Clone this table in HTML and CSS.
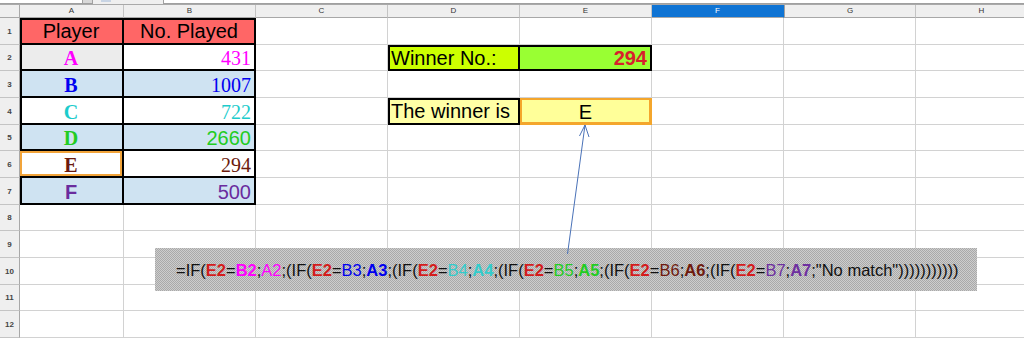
FILE: index.html
```html
<!DOCTYPE html>
<html>
<head>
<meta charset="utf-8">
<link rel="stylesheet" href="styles.css">
</head>
<body>
<div class="app">
  <div class="fbar">
    <div class="namebox"></div>
    <div class="nbtn"></div>
    <div class="ficon"></div>
    <div class="finput"></div>
  </div>
  <div class="sheet">
    <div class="grid">
      <div class="ch corner"></div>
      <div class="ch">A</div><div class="ch">B</div><div class="ch">C</div><div class="ch">D</div><div class="ch">E</div><div class="ch sel">F</div><div class="ch gsep">G</div><div class="ch">H</div>

      <div class="rh">1</div>
      <div class="c tb bl bt title">Player</div><div class="c tb bt title">No. Played</div>
      <div class="c"></div><div class="c"></div><div class="c"></div><div class="c"></div><div class="c"></div><div class="c"></div>

      <div class="rh">2</div>
      <div class="c tb bl grey ltr magenta">A</div><div class="c tb num serif magenta">431</div>
      <div class="c"></div><div class="c wb bl bt lime txt">Winner No.:</div><div class="c wb bt green num bold redtxt sans">294</div><div class="c"></div><div class="c"></div><div class="c"></div>

      <div class="rh">3</div>
      <div class="c tb bl blue ltr bluetxt">B</div><div class="c tb blue num serif bluetxt">1007</div>
      <div class="c"></div><div class="c"></div><div class="c"></div><div class="c"></div><div class="c"></div><div class="c"></div>

      <div class="rh">4</div>
      <div class="c tb bl ltr cyan">C</div><div class="c tb num serif cyan">722</div>
      <div class="c"></div><div class="c wb bl bt yellow txt">The winner is</div><div class="c yellow2 cursor mid txt">E</div><div class="c"></div><div class="c"></div><div class="c"></div>

      <div class="rh">5</div>
      <div class="c tb bl blue ltr greentxt">D</div><div class="c tb blue num sans greentxt">2660</div>
      <div class="c"></div><div class="c"></div><div class="c"></div><div class="c"></div><div class="c"></div><div class="c"></div>

      <div class="rh">6</div>
      <div class="c tb bl ltr maroon a6">E</div><div class="c tb num serif maroon">294</div>
      <div class="c"></div><div class="c"></div><div class="c"></div><div class="c"></div><div class="c"></div><div class="c"></div>

      <div class="rh">7</div>
      <div class="c tb bl blue ltr sansltr purple">F</div><div class="c tb blue num sans purple">500</div>
      <div class="c"></div><div class="c"></div><div class="c"></div><div class="c"></div><div class="c"></div><div class="c"></div>

      <div class="rh">8</div>
      <div class="c"></div><div class="c"></div><div class="c"></div><div class="c"></div><div class="c"></div><div class="c"></div><div class="c"></div><div class="c"></div>
      <div class="rh">9</div>
      <div class="c"></div><div class="c"></div><div class="c"></div><div class="c"></div><div class="c"></div><div class="c"></div><div class="c"></div><div class="c"></div>
      <div class="rh">10</div>
      <div class="c"></div><div class="c"></div><div class="c"></div><div class="c"></div><div class="c"></div><div class="c"></div><div class="c"></div><div class="c"></div>
      <div class="rh">11</div>
      <div class="c"></div><div class="c"></div><div class="c"></div><div class="c"></div><div class="c"></div><div class="c"></div><div class="c"></div><div class="c"></div>
      <div class="rh">12</div>
      <div class="c"></div><div class="c"></div><div class="c"></div><div class="c"></div><div class="c"></div><div class="c"></div><div class="c"></div><div class="c"></div>
    </div>

    <div class="formula">=IF(<b class="fr">E2</b>=<b class="fm">B2</b>;<span class="fm">A2</span>;(IF(<b class="fr">E2</b>=<span class="fb">B3</span>;<b class="fb">A3</b>;(IF(<b class="fr">E2</b>=<span class="fc">B4</span>;<b class="fc">A4</b>;(IF(<b class="fr">E2</b>=<span class="fg">B5</span>;<b class="fg">A5</b>;(IF(<b class="fr">E2</b>=<span class="fo">B6</span>;<b class="fo">A6</b>;(IF(<b class="fr">E2</b>=<span class="fp">B7</span>;<b class="fp">A7</b>;"No match")))))))))))</div>

    <svg class="arrow" width="1024" height="339" viewBox="0 0 1024 339">
      <line x1="567.5" y1="254" x2="585" y2="125" stroke="#4a72b8" stroke-width="1"/>
      <polyline points="579.5,136 585,125 589,137" fill="none" stroke="#4a72b8" stroke-width="1"/>
    </svg>
  </div>
</div>
</body>
</html>
```

FILE: styles.css
```css
html, body {
  margin: 0;
  padding: 0;
  background: #ffffff;
  overflow: hidden;
}
.app {
  width: 1024px;
  height: 339px;
  overflow: hidden;
  font-family: "Liberation Sans", Arial, sans-serif;
}
.fbar {
  height: 4px;
  background: #efefef;
  display: flex;
  border-bottom: 1px solid #a9a9a9;
  overflow: hidden;
}
.namebox {
  width: 82px;
  height: 3px;
  background: #fff;
  border-right: 1px solid #a0a0a0;
  border-bottom: 1px solid #a0a0a0;
}
.nbtn {
  width: 9px;
  height: 3px;
  background: #d8d8d8;
  border-bottom: 1px solid #a0a0a0;
  border-right: 1px solid #a0a0a0;
}
.ficon {
  width: 10px;
  height: 2px;
  margin-left: 8px;
  background: #c8d4e4;
}
.finput {
  flex: 1;
  margin-left: 52px;
  height: 3px;
  background: #fff;
  border-left: 1px solid #a0a0a0;
  border-bottom: 1px solid #a0a0a0;
}
.sheet {
  position: relative;
}
.grid {
  display: grid;
  grid-template-columns: 20px 104px 132px 132px 132px 132px 132px 132px 132px;
  grid-template-rows: 13px 27px 26px 27px 27px 26px 27px 27px 26px 27px 27px 26px 27px;
}
.ch {
  box-sizing: border-box;
  background: #efefef;
  border-right: 1px solid #c4c4c4;
  border-bottom: 1px solid #a8a8a8;
  font-size: 8px;
  color: #333;
  display: flex;
  align-items: center;
  justify-content: center;
  line-height: 1;
}
.corner {
  border-right: 1px solid #a8a8a8;
}
.sel {
  background: #0f74d4;
  color: #fff;
  border-right-color: #0f74d4;
}
.gsep {
  border-left: 1px solid #a0a0a0;
}
.rh {
  box-sizing: border-box;
  background: #efefef;
  border-right: 1px solid #a8a8a8;
  border-bottom: 1px solid #c4c4c4;
  font-size: 8px;
  font-weight: bold;
  color: #444;
  display: flex;
  align-items: center;
  justify-content: center;
}
.c {
  box-sizing: border-box;
  border-right: 1px solid #d2d2d2;
  border-bottom: 1px solid #d2d2d2;
  display: flex;
  align-items: center;
  padding: 1px 3px 0;
  font-size: 20px;
  line-height: 1;
  white-space: nowrap;
  overflow: hidden;
}
.tb, .wb {
  border-right: 2px solid #000;
  border-bottom: 2px solid #000;
}
.bl { box-shadow: inset 2px 0 0 #000; }
.bt { box-shadow: inset 0 2px 0 #000; }
.bl.bt { box-shadow: inset 2px 2px 0 #000; }
.title {
  background: #ff6666;
  color: #000;
  justify-content: center;
  padding-top: 1px;
}
.grey { background: #ececec; }
.blue { background: #cfe3f2; }
.lime { background: #ccff00; }
.green { background: #99ff33; }
.yellow { background: #ffffa6; }
.yellow2 { background: #ffff99; }
.txt { color: #000; }
.ltr {
  justify-content: center;
  font-family: "Liberation Serif", "Times New Roman", serif;
  font-weight: bold;
  padding-top: 2px;
}
.sansltr {
  font-family: "Liberation Sans", Arial, sans-serif;
}
.num { justify-content: flex-end; padding-top: 2px; }
.serif { font-family: "Liberation Serif", "Times New Roman", serif; }
.sans { font-family: "Liberation Sans", Arial, sans-serif; }
.bold { font-weight: bold; }
.mid { justify-content: center; }
.magenta { color: #ff00ff; }
.bluetxt { color: #0000f0; }
.cyan { color: #1ccccc; }
.greentxt { color: #22cc22; }
.maroon { color: #6b1a0d; }
.purple { color: #6a2c9e; }
.redtxt { color: #d8202c; }
.a6 {
  box-shadow: inset 2px 2px 0 #f2a43a, inset -2px -2px 0 #f2a43a;
}
.cursor {
  box-shadow: inset 0 0 0 2px #f4a62c;
  border-right: 1px solid #f4a62c;
  border-bottom: 1px solid #f4a62c;
}
.formula {
  position: absolute;
  left: 155px;
  top: 243px;
  width: 822px;
  height: 43px;
  box-sizing: border-box;
  padding-left: 21px;
  padding-top: 2px;
  display: flex;
  align-items: center;
  font-size: 16.5px;
  color: #111;
  white-space: nowrap;
  background: repeating-conic-gradient(#a9a9a9 0 25%, #cdcdcd 0 50%) 0 0 / 2px 2px;
}
.formula b { font-weight: bold; }
.fr { color: #d41c1c; }
.fm { color: #ff00ff; }
.fb { color: #0000ee; }
.fc { color: #33cccc; }
.fg { color: #22cc22; }
.fo { color: #6e1a0e; }
.fp { color: #6e30a0; }
.arrow {
  position: absolute;
  left: 0;
  top: -5px;
  pointer-events: none;
}
```
